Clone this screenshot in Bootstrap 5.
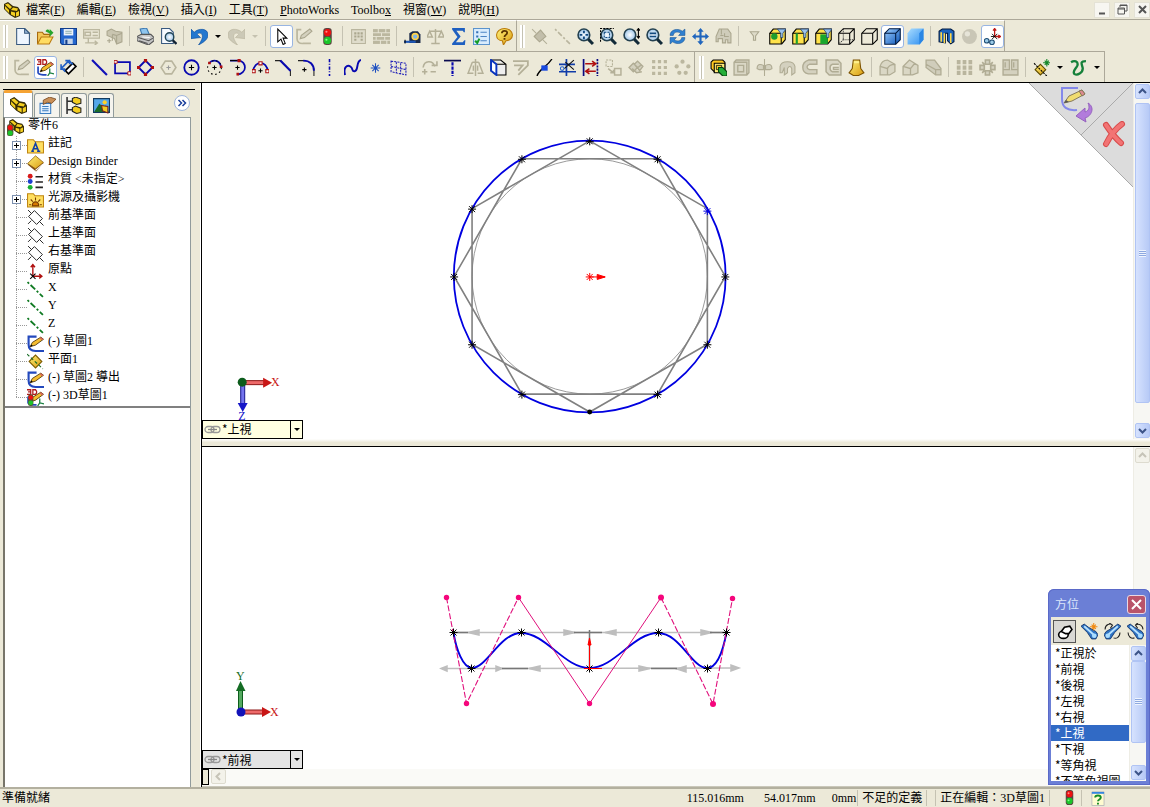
<!DOCTYPE html>
<html lang="zh-Hant">
<head>
<meta charset="utf-8">
<meta name="viewport" content="width=device-width, initial-scale=1">
<title>零件6 - 3D草圖1</title>
<link href="https://cdn.jsdelivr.net/npm/bootstrap@5.3.0/dist/css/bootstrap.min.css" rel="stylesheet">
<style>
:root{--face:#ece9d8;--shade:#aca899;--ui:"Liberation Serif","Noto Sans CJK TC",serif}
html,body{height:100%}
body{font:12px/16px var(--ui);background:var(--face);color:#000;overflow:hidden}
button{font:inherit;color:inherit;background:none;border:0;padding:0}
svg{display:block;flex:none}
.menu-row{height:20px;border-bottom:1px solid var(--shade)}
.menu-row a{color:#000;padding:2px 6px;text-decoration:none}
.win-btn{width:16px;height:16px;background:#f7f6f1;border:1px solid #e4e2d6;color:#555}
.tool-row{height:31px}
.tool-group{border-right:1px solid var(--shade);border-top:1px solid #fff;padding-left:3px}
.tool-row+.tool-row .tool-group{border-top:1px solid var(--shade)}
.grip{width:5px;height:23px;border-left:2px solid #fff;border-right:2px solid #fff;background:#c5c2b2;margin-right:3px}
.tool{width:23px;height:23px;display:flex;align-items:center;justify-content:center;flex:none}
.tool svg{width:17px;height:17px}
.tool.on{background:#fff;border:1px solid #98b5e2;border-radius:3px}
.drop{width:14px;height:23px;flex:none;display:flex;align-items:center;justify-content:center}
.drop::before{content:"";border:3px solid transparent;border-top-color:#000;border-bottom:0}
.drop.off::before{border-top-color:#c5c2b0}
.bar-sep{width:1px;height:20px;margin:0 4px 0 3px;background:#c5c2b2;flex:none}
.workspace{min-height:0;border-top:1px solid #000}
.side{width:201px;padding:6px 9px 0 3px;border-right:1px solid #fff;flex:none}
.side-tabs{height:28px;border-top:1px solid #000;margin-right:-4px}
.side-tab{width:26px;height:24px;margin-top:3px;border:1px solid #919b9c;border-bottom:0;border-radius:3px 3px 0 0;background:#f5f4ee;display:flex;align-items:center;justify-content:center;margin-right:1px}
.side-tab.active{width:30px;height:27px;margin-top:0;background:#fff;border-top:3px solid #f5a334}
.side-tab svg{width:17px;height:17px}
.more{width:16px;height:16px;border:1px solid #9db4dc;border-radius:50%;background:#fff;color:#1a3f9c;display:flex;align-items:center;justify-content:center;margin:5px 5px 0 auto}
.tree-box{background:#fff;border:1px solid #919b9c;border-left:2px solid #77756a;border-bottom:0;min-height:0;overflow:hidden}
.tree{padding:0 0 0 2px;border-bottom:2px solid #808080;white-space:nowrap}
.tree li{height:18px;display:flex;align-items:center}
.tree svg{width:17px;height:17px}
.tree-text{padding:0 0 4px 4px}
.twig{width:20px;height:18px;flex:none;display:flex;align-items:center;padding-left:5px;
 background:repeating-linear-gradient(90deg,#999 0 1px,transparent 1px 2px) 9px 9px/11px 1px no-repeat,repeating-linear-gradient(#999 0 1px,transparent 1px 2px) 9px 0/1px 18px no-repeat}
.tree li:last-child .twig{background-size:11px 1px,1px 10px}
.plus{width:9px;height:9px;border:1px solid #7b8fae;background:linear-gradient(#000,#000) 1px 3px/5px 1px no-repeat,linear-gradient(#000,#000) 3px 1px/1px 5px no-repeat,#fff}
.views{border-left:1px solid #000;min-width:0}
.pane{min-height:0;background:#fff}
.pane-top{flex:357 1 0}
.pane-bottom{flex:341 1 0}
.splitter{height:8px;border-bottom:1px solid #000;background:linear-gradient(#fff,var(--face) 50%)}
.canvas{min-width:0;min-height:0;overflow:hidden}
.canvas>svg{width:100%;height:100%}
.scroll-v{width:17px;background:#f7f7f3;padding:1px;flex:none;border-left:1px solid #eeede5}
.sb-btn,.sb-thumb{background:linear-gradient(90deg,#d6e2fe,#b7caf6);border:1px solid #b0c4f4;border-radius:2px;color:#3c5488;display:flex;align-items:center;justify-content:center}
.sb-btn{width:15px;height:15px;flex:none}
.sb-btn svg{width:9px;height:9px}
.sb-btn.off{background:#f3f2ea;border-color:#dddbcf;color:#c6c4b8}
.sb-thumb{width:15px}
.sb-lines{width:7px;height:7px;background:repeating-linear-gradient(#eef4fe 0 1px,#8ea9e0 1px 2px)}
.view-name{left:0;bottom:0;width:101px;height:19px;border:1px solid #000;background:#ffffe1;font-family:"Noto Sans CJK TC",sans-serif}
.view-name.idle{background:#e4e4e4}
.view-name select{appearance:none;border:0;background:none;padding:0;font:12px/16px "Noto Sans CJK TC",sans-serif;color:#000;width:70px;height:17px}
.view-name .drop{width:12px;height:17px;border-left:1px solid #000}
.view-name svg{width:17px;height:9px;margin:0 1px}
.corner{right:0;top:0;width:104px;height:104px}
.corner-ok{left:31px;top:2px}
.corner-no{left:72px;top:38px}
.scroll-h{height:18px;background:#fafaf7;border-bottom:1px solid #c9c7ba}
.split-box{width:7px;height:16px;border:1px solid #000;background:var(--face);margin-right:2px}
.palette{right:0;bottom:2px;width:102px;height:196px;background:#6b7fd6;border-radius:6px 6px 0 0;padding:0 4px 4px 3px;box-shadow:inset 0 0 0 1px #5a69c8}
.palette-head{height:28px;padding:2px 0 0 4px;color:#dce6fa}
.palette-head h2{font:12px/16px "Noto Sans CJK TC",sans-serif;margin:0}
.shut{width:19px;height:19px;border:1px solid #e8d8e4;border-radius:3px;background:#b9546a;color:#fff;display:flex;align-items:center;justify-content:center}
.palette-tools{height:28px;background:var(--face);padding:1px 2px}
.palette-tools .tool.push{border:1px solid #555;background:#d9d8d4;margin-right:2px}
.palette-list{background:#fff;min-height:0}
.view-list{font:12px/16px "Noto Sans CJK TC",sans-serif;overflow:hidden}
.view-list button{display:block;width:100%;height:16px;text-align:left;padding-left:4px;white-space:nowrap}
.view-list .sel{background:#316ac5;color:#fff}
.status{height:20px;border-top:2px solid #b3b09f;padding-left:2px;white-space:nowrap}
.status .cell{border-right:1px solid #c5c2b2;padding-right:4px;margin-right:4px;min-height:16px}
.status .cell-z{padding-right:1px}
.status-end{padding:0 45px 0 4px}
.status svg{width:15px;height:15px}
</style>
</head>
<body class="d-flex flex-column">

<svg width="0" height="0" class="position-absolute" aria-hidden="true">
<defs>
<linearGradient id="gold" x1="0" y1="0" x2="1" y2="1"><stop offset="0" stop-color="#fff27a"/><stop offset="1" stop-color="#d99a10"/></linearGradient>
<linearGradient id="azure" x1="0" y1="0" x2="1" y2="1"><stop offset="0" stop-color="#9fd0ff"/><stop offset="1" stop-color="#0c55b8"/></linearGradient>
<linearGradient id="sky" x1="0" y1="0" x2="1" y2="1"><stop offset="0" stop-color="#a8dcff"/><stop offset="1" stop-color="#2f8ff0"/></linearGradient>
<radialGradient id="lens"><stop offset="0" stop-color="#fff"/><stop offset="1" stop-color="#9cc4e8"/></radialGradient>
</defs>
<g id="star-mark" stroke="currentColor" fill="none"><path d="M-4 0H4M0-4V4M-3-3L3 3M-3 3L3-3"/></g>
<symbol id="part" viewBox="0 0 16 16"><path d="M0 2L4 0 9 4 14 5 16 8V14L11 16 6 13 0 7z" fill="#352b05"/><path d="M1 2.500L4 1.500 8 5 6 7zM7 8L9 5.500 14 6.500 13 9zM7 9.500L11 10.500V14.500L7 12.500zM12 10.500L15 9V13.500L12 14.500zM1 4L5 8V11L1 7z" fill="#f4cf20"/></symbol>
<symbol id="new" viewBox="0 0 16 16"><path d="M2.500.5H10L14.500 5V15.500H2.500z" fill="#eef6ff" stroke="#38597f"/><path d="M10 .5V5H14.500z" fill="#9fbfe0" stroke="#38597f"/></symbol>
<symbol id="open" viewBox="0 0 16 16"><path d="M.5 15V4H5L6.500 6H12V9" fill="#f4c95a" stroke="#a8690c"/><path d="M.5 15L4 8.500H15L11.500 15z" fill="#ffdc62" stroke="#b87a12"/><path d="M8 3C9 1 11 1 12 3V1L15.500 4.500 12 8V5.500C11 4 9.500 4 8 3z" fill="#27a52c"/></symbol>
<symbol id="save" viewBox="0 0 16 16"><path d="M.5 .5H15.500V15.500H2L.5 14z" fill="#2467cf" stroke="#123e8c"/><path d="M3.500 1H12.500V7H3.500z" fill="#eef3fb"/><path d="M4 10H12V15H4z" fill="#c5d4ea"/><path d="M5 11H7V15H5z" fill="#123e8c"/><path d="M5 3H11M5 5H11" stroke="#8aa"/></symbol>
<symbol id="g-draw" viewBox="0 0 16 16"><path d="M.5 1.500H15.500V9.500H.5zM2 4H7V7H2zM9 4H14M9 7H14M5 10V14M2 14H13M11 12L13.500 14 11 16" fill="none" stroke="#bbb79f" stroke-width="1.300"/></symbol>
<symbol id="g-asm" viewBox="0 0 16 16"><path d="M1 3L5 1 9 3 15 4V13L10 15 8 10 1 7z" fill="#c9c5b0" stroke="#aaa68e"/><path d="M6 6V12M10 7V14M6 6L10 7 15 5M1 12H5M3 10V14" stroke="#aaa68e" fill="none"/></symbol>
<symbol id="print" viewBox="0 0 16 16"><path d="M3 1L9 0 12 7H5z" fill="#8ec5ef" stroke="#3b78b0"/><path d="M0 8L4 6H13L16 9V12L11 16 0 12z" fill="#c4c4c4" stroke="#555"/><path d="M1 9L11 12 15 9.500M2 12L10 14.500" fill="none" stroke="#555"/><path d="M5 8.500L12 9" stroke="#fff"/></symbol>
<symbol id="preview" viewBox="0 0 16 16"><path d="M1.500.5H9L12.500 4V14.500H1.500z" fill="#f6faff" stroke="#38597f"/><circle cx="9" cy="8.500" r="4" fill="url(#lens)" stroke="#245" stroke-width="1.300"/><path d="M12 11.500L15.500 15" stroke="#123" stroke-width="2.200"/></symbol>
<symbol id="undo" viewBox="0 0 16 16"><path d="M0 1L3 4C7 0 16 0 16 6.500 16 11 11 14 7 16 11 11 12 6 9 5 7.500 4.500 6.500 5 6 6L9 9 0 10z" fill="#2277cf" stroke="#0f4f9c" stroke-width=".6"/></symbol>
<symbol id="redo" viewBox="0 0 16 16"><path d="M16 1L13 4C9 0 0 0 0 6.500 0 11 5 14 9 16 5 11 4 6 7 5 8.500 4.500 9.500 5 10 6L7 9 16 10z" fill="#ccc9b7" stroke="#b9b59e" stroke-width=".6"/></symbol>
<symbol id="arrow" viewBox="0 0 16 16"><path d="M4.500 1V13L7.500 10.500 9.500 15.500 11.500 14.500 9.500 9.500H13z" fill="#fff" stroke="#000"/></symbol>
<symbol id="g-sketch" viewBox="0 0 16 16"><path d="M5 1.500H1V10C1 13 3 15 7 14.500H14" fill="none" stroke="#bbb79f" stroke-width="1.600"/><path d="M4 10L5 7 13 1 15 3 8 9z" fill="#d4d1bf" stroke="#aaa68e"/></symbol>
<symbol id="light" viewBox="0 0 16 16"><rect x="4" y="0" width="8" height="16" rx="3" fill="#5c4440"/><circle cx="8" cy="4.300" r="3.400" fill="#e11"/><circle cx="8" cy="11.700" r="3.400" fill="#1bc62b"/><circle cx="7" cy="3.500" r="1" fill="#f88"/><circle cx="7" cy="11" r="1" fill="#8f8"/></symbol>
<symbol id="g-grid" viewBox="0 0 16 16"><path d="M1.500 1.500H14.500V14.500H1.500z" fill="#dfdccb" stroke="#b9b59e"/><path d="M4 4H6V6H4zM7 4H9V6H7zM10 4H12V6H10zM4 7H6V9H4zM7 7H9V9H7zM10 7H12V9H10zM4 10H6V12H4zM10 10H12V12H10z" fill="#aaa68e"/></symbol>
<symbol id="g-brick" viewBox="0 0 16 16"><path d="M0 1H16V15H0z" fill="#bbb79f"/><path d="M0 4.500H16M0 8H16M0 11.500H16M5 1V4.500M12 1V4.500M8 4.500V8M3 8V11.500M11 8V11.500M7 11.500V15M13 11.500V15" stroke="#e6e3d3"/></symbol>
<symbol id="tape" viewBox="0 0 16 16"><path d="M5 14V5L8 3H13L15.500 6V14z" fill="#1b2a48"/><circle cx="10.500" cy="8" r="3.500" fill="#ffd24a"/><circle cx="10.500" cy="8" r="2" fill="#7fb6ea"/><path d="M0 13H11" stroke="#1e56b5" stroke-width="2"/><path d="M1 14.500V11" stroke="#000"/></symbol>
<symbol id="g-scale" viewBox="0 0 16 16"><path d="M8 1V14M4 14.500H12M2 3H14M0 8.500H5L2.500 3zM11 8.500H16L13.500 3z" fill="none" stroke="#b4b098" stroke-width="1.400"/></symbol>
<symbol id="sigma" viewBox="0 0 16 16"><path d="M2 0H14V4H13L12 2.500H6L10 8 5.500 13.500H12L13.500 11.500H14.500L14 16H2V14.500L7 8.500 2 1.500z" fill="#1e5fc0"/></symbol>
<symbol id="checks" viewBox="0 0 16 16"><path d="M.5.5H15.500V15.500H.5z" fill="#d9ecfd" stroke="#5b93cc"/><path d="M3 3H5V5H3zM3 7H5V9H3z" fill="#3570b5"/><path d="M7 4H13M7 8H13M7 12H13" stroke="#4c84c3"/><path d="M2 12L4 14 6 10" fill="none" stroke="#159c28" stroke-width="2"/></symbol>
<symbol id="help" viewBox="0 0 16 16"><path d="M8 .5C12 .5 15.500 3 15.500 6.500 15.500 10 12 12 9.500 12L7 16 6 12C3 12 .5 10 .5 6.500.5 3 4 .5 8 .5z" fill="url(#gold)" stroke="#b97a0a"/><path d="M5.500 5C5.500 2 10.500 2 10.500 4.500 10.500 6.500 8 6.500 8 8.500M8 9.500V11" fill="none" stroke="#5c3500" stroke-width="1.700"/></symbol>
<symbol id="g-plane" viewBox="0 0 16 16"><path d="M1 1L5 5M11 11L15 15" stroke="#b4b098"/><path d="M3 8L9 2 14 8 8 13z" fill="#c2beaa" stroke="#aaa68e"/></symbol>
<symbol id="g-axis" viewBox="0 0 16 16"><path d="M1 1L15 15" stroke="#b9b59e" stroke-width="1.500" stroke-dasharray="2 2 5 2"/></symbol>
<symbol id="mag" viewBox="0 0 16 16"><circle cx="6.500" cy="6.500" r="5.500" fill="url(#lens)" stroke="#23404f" stroke-width="1.500"/><path d="M10.500 10.500L15 15" stroke="#122a38" stroke-width="2.800"/></symbol>
<symbol id="zfit" viewBox="0 0 16 16"><use href="#mag"/><path d="M6.500 2.500V5M6.500 8V10.500M2.500 6.500H5M8 6.500H10.500" fill="none" stroke="#124a80" stroke-width="1.800"/></symbol>
<symbol id="zarea" viewBox="0 0 16 16"><use href="#mag"/><path d="M.5 13V.5H13" fill="none" stroke="#000" stroke-dasharray="2 1"/><path d="M4 4H9V9H4z" fill="none" stroke="#124a80" stroke-dasharray="2 1"/></symbol>
<symbol id="zinout" viewBox="0 0 16 16"><use href="#mag"/><path d="M14.500 1V9M13 2.500L14.500.5 16 2.500M13 7.500L14.500 9.500 16 7.500" fill="none" stroke="#000"/></symbol>
<symbol id="zsel" viewBox="0 0 16 16"><use href="#mag"/><path d="M3.500 5H9.500M3.500 8H9.500" stroke="#124a80" stroke-width="1.600"/></symbol>
<symbol id="rotate" viewBox="0 0 16 16"><path d="M1 7C1 1 9 0 12.500 3L15 1V7H9L11 5C8 3 4.500 3.500 4 7zM15 9C15 15 7 16 3.500 13L1 15V9H7L5 11C8 13 11.500 12.500 12 9z" fill="#2f80d0" stroke="#14508f" stroke-width=".5"/></symbol>
<symbol id="pan" viewBox="0 0 16 16"><path d="M8 0L11 3.500H9V7H12.500V5L16 8 12.500 11V9H9V12.500H11L8 16 5 12.500H7V9H3.500V11L0 8 3.500 5V7H7V3.500H5z" fill="#1f65bd"/></symbol>
<symbol id="g-car" viewBox="0 0 16 16"><path d="M1 8L4 1H12L15 5V14H12V11H10V14H7V10H3V13H1z" fill="#cfccba" stroke="#aaa68e"/><path d="M5 7H8M9 5V8H13M6 1V6" stroke="#aaa68e" fill="none"/></symbol>
<symbol id="g-filter" viewBox="0 0 16 16"><path d="M4 3.500H12L9 7.500V11.500H7V7.500z" fill="#dedbc9" stroke="#aaa68e"/></symbol>
<symbol id="cube-y" viewBox="0 0 16 16"><path d="M.7 5L4 1H15.300V11L12 15H.7z" fill="#ffe24a" stroke="#000"/><path d="M.7 5H11.500V15M11.500 5L15.300 1" fill="none" stroke="#000"/></symbol>
<symbol id="fv" viewBox="0 0 16 16"><use href="#cube-y"/><circle cx="5" cy="8" r="3" fill="#1c9e2e"/><path d="M8 1H16L13 5V9H11V5z" fill="#9dc4ec" stroke="#1d3f72" stroke-width=".7"/></symbol>
<symbol id="fe" viewBox="0 0 16 16"><use href="#cube-y"/><path d="M4.500 5V15" stroke="#1c9e2e" stroke-width="2"/><path d="M8 1H16L13 5V9H11V5z" fill="#9dc4ec" stroke="#1d3f72" stroke-width=".7"/></symbol>
<symbol id="ff" viewBox="0 0 16 16"><use href="#cube-y"/><path d="M5 6H12V15H5z" fill="#18a62d"/><path d="M8 1H16L13 5V9H11V5z" fill="#9dc4ec" stroke="#1d3f72" stroke-width=".7"/></symbol>
<symbol id="wire" viewBox="0 0 16 16"><path d="M.7 5L5 .7H15.300V11L11 15.300H.7zM.7 5H11V15.300M11 5L15.300.7" fill="none" stroke="#000"/><path d="M5 1V11H15M5 11L1 15" fill="none" stroke="#333" stroke-dasharray="1 1"/></symbol>
<symbol id="hidden" viewBox="0 0 16 16"><path d="M.7 5L5 .7H15.300V11L11 15.300H.7zM.7 5H11V15.300M11 5L15.300.7" fill="none" stroke="#000"/></symbol>
<symbol id="shaded" viewBox="0 0 16 16"><path d="M.7 5L5 .7H15.300V11L11 15.300H.7z" fill="url(#azure)" stroke="#001a40"/><path d="M.7 5H11V15.300M11 5L15.300.7" fill="none" stroke="#001a40"/></symbol>
<symbol id="shade2" viewBox="0 0 16 16"><path d="M.5 5L4 .5H15.500V11L12 15.500H.5z" fill="url(#sky)"/><path d="M11.500 5L15.500.5V11L11.500 15.500z" fill="#2a86e4"/></symbol>
<symbol id="section" viewBox="0 0 16 16"><path d="M1 3L4 1H12L15 3V13L12 15 9 12V5H7V14L1 13z" fill="#1b62bb" stroke="#001a40"/><path d="M3 4V13M6 5V14M12 5V14" stroke="#ffd84a" stroke-width="1.500"/></symbol>
<symbol id="g-ball" viewBox="0 0 16 16"><circle cx="8" cy="8" r="7" fill="#c9c6b6"/><circle cx="6" cy="5.500" r="2.500" fill="#e6e4d8"/></symbol>
<symbol id="glasses" viewBox="0 0 16 16"><circle cx="2.500" cy="12" r="2.200" fill="#9ccbe8" stroke="#1a4a72"/><circle cx="7.500" cy="13.500" r="2.200" fill="#9ccbe8" stroke="#1a4a72"/><path d="M10 1V8H15M8.500 2.500L10 .5 11.500 2.500M13.500 6.500L15.500 8 13.500 9.500" fill="none" stroke="#c01818" stroke-width="1.200"/><path d="M7.500 5.500L12.500 10.500M7.500 10.500L12.500 5.500M6.500 8H10" stroke="#000" stroke-width=".8"/></symbol>

<symbol id="pencil" viewBox="0 0 16 16"><path d="M3 11L5 7 13 2 15.500 4 8 9.500z" fill="#f5bd30" stroke="#4c3000" stroke-width=".8"/><path d="M13 2L15.500 4 14 5 12 3z" fill="#d5645a"/><path d="M3 11L4 9 5.500 10z" fill="#000"/></symbol>
<symbol id="sketch" viewBox="0 0 16 16"><path d="M9 1.500H1.500V9C1.500 13 4 15 8 15H16" fill="none" stroke="#2349bd" stroke-width="2"/><use href="#pencil"/></symbol>
<symbol id="sketch3d" viewBox="0 0 16 16"><path d="M0 .7H3.500V5H0M1 2.800H3.500M5.500.7H8L9 2V4L8 5H5.500z" fill="none" stroke="#b01c1c" stroke-width="1.200"/><path d="M1 7V13C2 15 5 15 9 15" fill="none" stroke="#2349bd" stroke-width="1.600"/><use href="#pencil" y="1"/><path d="M12 9V13L16 14M12 13L10 16" fill="none" stroke="#188040" stroke-width="1.200"/></symbol>
<symbol id="dim" viewBox="0 0 16 16"><path d="M5 11L12 4 15 7 8 14z" fill="#fff" stroke="#000" stroke-width="1.500"/><path d="M1 9L8 2M1 5V9.500H5M5 1.500H9V5M1 8L5 12M8 1L12 5" fill="none" stroke="#225fc4" stroke-width="1.500"/></symbol>
<symbol id="line" viewBox="0 0 16 16"><path d="M1 1L15 15" stroke="#1010b8" stroke-width="2"/></symbol>
<symbol id="rect" viewBox="0 0 16 16"><path d="M1 3H15V13.500H1z" fill="none" stroke="#0808b0" stroke-width="1.600"/><path d="M0 1.500H3V4H0zM13 12H16V15H13z" fill="#fff" stroke="#b01010" stroke-width=".9"/></symbol>
<symbol id="diam" viewBox="0 0 16 16"><path d="M8 1.500L14.500 8 8 14.500 1.500 8z" fill="none" stroke="#0808b0" stroke-width="1.800"/><path d="M6.500 0H9.500V3H6.500zM0 6.500H3V9.500H0zM13 6.500H16V9.500H13zM6.500 13H9.500V16H6.500z" fill="#b01010"/></symbol>
<symbol id="g-hex" viewBox="0 0 16 16"><path d="M5 2H11L15 8 11 14H5L1 8z" fill="none" stroke="#b9b59e" stroke-width="1.500"/><path d="M8 6V10M6 8H10" stroke="#999"/></symbol>
<symbol id="circ" viewBox="0 0 16 16"><circle cx="8" cy="8" r="6.800" fill="none" stroke="#0808b0" stroke-width="1.700"/><path d="M8 5.500V10.500M5.500 8H10.500" stroke="#000"/></symbol>
<symbol id="arc1" viewBox="0 0 16 16"><path d="M3 4C6 0 13 1 14 7" fill="none" stroke="#0808b0" stroke-width="1.600"/><circle cx="8" cy="8" r="6.500" fill="none" stroke="#000" stroke-dasharray="1.500 2.500"/><path d="M8 6V10M6 8H10" stroke="#000"/><path d="M2 2.500H4.500V5H2zM13 6H15.500V8.500H13z" fill="#b01010"/></symbol>
<symbol id="arc2" viewBox="0 0 16 16"><path d="M1 1.500H9C13 1.500 15 5 15 8S12 14.500 8 14.500" fill="none" stroke="#0808b0" stroke-width="1.600"/><path d="M1 1.500H8" stroke="#000"/><path d="M8 6V10M6 8H10" stroke="#000"/><path d="M8 0H11V3H8zM7 13H9.500V15.500H7z" fill="#b01010"/></symbol>
<symbol id="arc3" viewBox="0 0 16 16"><path d="M1 12C2 1 14 1 15 12" fill="none" stroke="#0808b0" stroke-width="1.600"/><path d="M6.500 2.500H9.500V5.500H6.500zM0 10H3V13H0zM13 10H16V13H13z" fill="#fff" stroke="#b01010"/><path d="M8 9V13M6 11H10" stroke="#000"/></symbol>
<symbol id="chamf" viewBox="0 0 16 16"><path d="M0 1.500H5L14.500 11V16" fill="none" stroke="#222"/><path d="M5 1.500L14.500 11" stroke="#0808b0" stroke-width="2"/></symbol>
<symbol id="fillet" viewBox="0 0 16 16"><path d="M0 1.500H6M15 9V16" stroke="#222"/><path d="M5 1.500C11 1.500 15 5 15 11" fill="none" stroke="#0808b0" stroke-width="1.800"/><path d="M6 8V12M4 10H8" stroke="#000"/></symbol>
<symbol id="cline" viewBox="0 0 16 16"><path d="M8 0V16" stroke="#0808b0" stroke-width="1.500" stroke-dasharray="3 1.500 1 1.500"/></symbol>
<symbol id="spline" viewBox="0 0 16 16"><path d="M1 15C-1 8 3 5 6 7 9 9 7 12 10 11.500 14 11 11 2 16 1" fill="none" stroke="#0808b0" stroke-width="1.800"/></symbol>
<symbol id="pt" viewBox="0 0 16 16"><path d="M8 4V13M3.500 8.500H12.500M5 5.500L11 11.500M11 5.500L5 11.500" stroke="#1d4fc0"/></symbol>
<symbol id="skplane" viewBox="0 0 16 16"><path d="M1 2L15 4V15L1 12zM1 7L15 10M6 3V13M10 4V14" fill="none" stroke="#2222b8" stroke-dasharray="2 1"/></symbol>
<symbol id="g-redo2" viewBox="0 0 16 16"><path d="M2 8C3 1 11 1 13 7M10 6H15V2" fill="none" stroke="#b4b098" stroke-width="1.500"/><path d="M1 12H6M3.500 9.500V14.500M9 12H14" stroke="#b4b098" stroke-width="1.500"/></symbol>
<symbol id="tee" viewBox="0 0 16 16"><path d="M0 1.500H16" stroke="#0a0a50" stroke-width="1.600"/><path d="M8 3V16" stroke="#0808b0" stroke-width="2" stroke-dasharray="3 1"/></symbol>
<symbol id="g-mirror" viewBox="0 0 16 16"><path d="M8 0V16M5 3L1 13.500H6M11 3L15 13.500H10M6 6V11M10 6V11M5 3H11" fill="none" stroke="#b4b098" stroke-width="1.400"/></symbol>
<symbol id="convert" viewBox="0 0 16 16"><path d="M1 1H10L15 5V15H6L1 11zM1 1L6 5H15M6 5V15" fill="#eee" stroke="#000"/><path d="M1 1V11L6 15V5z" fill="#fff" stroke="#0a35c0" stroke-width="1.800"/></symbol>
<symbol id="g-offset" viewBox="0 0 16 16"><path d="M0 2H14V6L5 15M1 6H9L5 11" fill="none" stroke="#b4b098" stroke-width="1.700"/></symbol>
<symbol id="snap" viewBox="0 0 16 16"><path d="M1 16C3 9 10 8 15 0" fill="none" stroke="#000" stroke-width="1.300"/><path d="M5 6H11V11H5z" fill="#194ae0"/></symbol>
<symbol id="trim" viewBox="0 0 16 16"><path d="M0 5H15M0 12H16M7 0V16" stroke="#113ca8" stroke-width="1.600"/><path d="M5 9L14 1M6 3L14 10" stroke="#111"/><circle cx="3" cy="9" r="1.700" fill="none" stroke="#2563d0"/></symbol>
<symbol id="extend" viewBox="0 0 16 16"><path d="M1.500 0V16" stroke="#0a0a80" stroke-width="1.600"/><path d="M14.500 0V16" stroke="#0a0a80" stroke-dasharray="2 1" stroke-width="1.600"/><path d="M3 4.500H12M9.500 2L13 4.500 9.500 7M13 11.500H4M7 9L3.500 11.500 7 14" fill="none" stroke="#b01010" stroke-width="1.500"/></symbol>
<symbol id="g-move" viewBox="0 0 16 16"><path d="M1 1H7V7H1z" fill="none" stroke="#b4b098" stroke-dasharray="2 1"/><path d="M9 9H15V15H9zM3 9L8 13M5 13H8V10" fill="none" stroke="#b4b098" stroke-width="1.400"/></symbol>
<symbol id="g-rot" viewBox="0 0 16 16"><path d="M1 8L5 4 9 8 5 12zM6 5L9 2 14 7 11 11zM8 9L12 6M4 9L8 13 13 12" fill="#d4d1bf" stroke="#b0ac94" stroke-width="1.300"/></symbol>
<symbol id="g-lin" viewBox="0 0 16 16"><path d="M1 1H4V4H1zM6.500 1H9.500V4H6.500zM12 1H15V4H12zM1 6.500H4V9.500H1zM6.500 6.500H9.500V9.500H6.500zM12 6.500H15V9.500H12zM1 12H4V15H1zM6.500 12H9.500V15H6.500zM12 12H15V15H12z" fill="#bbb79f"/></symbol>
<symbol id="g-cir" viewBox="0 0 16 16"><g fill="#bbb79f"><circle cx="8" cy="2.500" r="2"/><circle cx="2.500" cy="7" r="2"/><circle cx="13.500" cy="7" r="2"/><circle cx="5" cy="13" r="2"/><circle cx="11" cy="13" r="2"/></g></symbol>
<symbol id="extrude" viewBox="0 0 16 16"><path d="M1 3L3 1H12L14 3V12H4L1 9z" fill="#ffc820" stroke="#000"/><path d="M4 4H14V13H4z" fill="#ffec78" stroke="#000"/><path d="M6 6H11V10H6z" fill="#f5c830" stroke="#000" stroke-width=".7"/><path d="M8 8H12L16 12V16H12L8 12z" fill="#25ad38" stroke="#04400c"/></symbol>
<symbol id="g-cut" viewBox="0 0 16 16"><path d="M1 3L3 1H15V13L13 15H1zM1 3H13V15M4.500 6H10V12H4.500z" fill="#dad7c5" stroke="#b0ac94" stroke-width="1.300"/></symbol>
<symbol id="g-rev" viewBox="0 0 16 16"><path d="M8 0V16M1 9C1 4 5 5 7 6V10H3zM15 9C15 4 11 5 9 6V10H13z" fill="#d4d1bf" stroke="#b0ac94"/></symbol>
<symbol id="g-arch" viewBox="0 0 16 16"><path d="M1 13V7C2 1 14 1 15 7V13L12 15V9C11 6 9 7 8 9V13L5 15V8L3 13z" fill="#d4d1bf" stroke="#b0ac94"/></symbol>
<symbol id="g-sweep" viewBox="0 0 16 16"><path d="M14 1H6C-1 3-1 13 6 14H14V10H7C4 9 4 6 7 5H14z" fill="#d4d1bf" stroke="#b0ac94" stroke-width="1.300"/></symbol>
<symbol id="g-swcut" viewBox="0 0 16 16"><path d="M1 1H12L15 4V15H4L1 12zM13 5H7C4 6 4 11 7 12H13M13 8H8V10H13" fill="#d9d6c5" stroke="#b0ac94" stroke-width="1.400"/></symbol>
<symbol id="loft" viewBox="0 0 16 16"><path d="M5 1H11L12 9 15 13 10 15.500H5L1 13 4 9z" fill="url(#gold)" stroke="#7c5200"/><path d="M5.500 2H10.500V4H5.500z" fill="#ffef8a"/></symbol>
<symbol id="g-fil" viewBox="0 0 16 16"><path d="M1 7C2 3 5 1 8 1L15 5V12L10 15H1zM1 7L8 9V15M8 9C9 6 12 5 15 5" fill="#dad7c5" stroke="#b0ac94" stroke-width="1.200"/></symbol>
<symbol id="g-cha" viewBox="0 0 16 16"><path d="M1 7L7 1 15 6V13L10 15H1zM1 7L8 9V15M8 9L12 4" fill="#dad7c5" stroke="#b0ac94" stroke-width="1.200"/></symbol>
<symbol id="g-rib" viewBox="0 0 16 16"><path d="M1 1H9L15 9V15H10L1 8zM1 5L10 10V15M10 10H15" fill="#d0cdbb" stroke="#b0ac94" stroke-width="1.200"/></symbol>
<symbol id="g-pat" viewBox="0 0 16 16"><path d="M2.500 1V15M8 1V15M13.500 1V15" stroke="#b9b59e" stroke-width="3.500" stroke-dasharray="4 1"/></symbol>
<symbol id="g-cpat" viewBox="0 0 16 16"><path d="M6 1H10V5H6zM6 11H10V15H6zM1 6H5V10H1zM11 6H15V10H11zM3 3L5 5M13 3L11 5M3 13L5 11M13 13L11 11" fill="#d4d1bf" stroke="#b0ac94" stroke-width="1.500"/></symbol>
<symbol id="g-mir" viewBox="0 0 16 16"><path d="M1 1H7V10H1zM9 1H15V10H9zM1 10V15H15V10M3 3V8M11 3V8" fill="#d4d1bf" stroke="#b0ac94" stroke-width="1.300"/></symbol>
<symbol id="refgeo" viewBox="0 0 16 16"><path d="M2 10L7 5 12 10 7 15z" fill="url(#gold)" stroke="#5c4a00"/><path d="M1 4L13 16" stroke="#000" stroke-dasharray="2 1"/><path d="M13 0V7M9.500 3.500H16.500M11 1.500L15 5.500M15 1.500L11 5.500" stroke="#15872a"/></symbol>
<symbol id="curve" viewBox="0 0 16 16"><path d="M1 3C4 1 8 2 7 6 6 9 2 11 4 14 7 16 12 13 12 9 12 6 8 2 15 2" fill="none" stroke="#15803a" stroke-width="2.200"/></symbol>

<symbol id="hand" viewBox="0 0 16 16"><path d="M1 6H11V15.500H1z" fill="#e6f2ff" stroke="#3a7cc0"/><path d="M3 9H9M3 11H9M3 13H9" stroke="#3a7cc0"/><path d="M4 3L10 0 16 2 12 6 8 5 4 7z" fill="#c99058" stroke="#6b3c14" stroke-width=".7"/></symbol>
<symbol id="config" viewBox="0 0 16 16"><path d="M1 0V16M1 4H7M1 12H7" stroke="#333" stroke-width="1.500"/><path d="M6 1.500L9 0 14 2V6L10 7 6 5zM6 10L9 8.500 14 10.500V14.500L10 15.500 6 13.500z" fill="#f2cc20" stroke="#222"/></symbol>
<symbol id="photo" viewBox="0 0 16 16"><path d="M.5 1.500H15.500V14.500H.5z" fill="#56a8ea" stroke="#123a60"/><path d="M1 14L6 6 10 10 12 8 15 14z" fill="#1b6c2a"/><circle cx="11" cy="5" r="2" fill="#ffd22a"/><path d="M8 8L14 9V15L9 13z" fill="#f2cc20" stroke="#722"/></symbol>
<symbol id="partlight" viewBox="0 0 16 16"><use href="#part" x="2" width="14" height="14"/><rect x="0" y="5" width="6" height="11" rx="2" fill="#553"/><circle cx="3" cy="8" r="2.400" fill="#e11"/><circle cx="3" cy="13.200" r="2.400" fill="#1bc62b"/></symbol>
<symbol id="folder" viewBox="0 0 16 16"><path d="M.5 15V2.500H6L7.500 4.500H15.500V15z" fill="#ffdf60" stroke="#c08612"/></symbol>
<symbol id="notes" viewBox="0 0 16 16"><use href="#folder"/><path d="M4 13.500H6.500M9.500 13.500H12.500M5 13.500L8 6 11 13.500M6 11H10" fill="none" stroke="#123fa8" stroke-width="1.400"/></symbol>
<symbol id="binder" viewBox="0 0 16 16"><path d="M.5 9L8 1.500 15.500 8 8.500 15.500z" fill="#7d4a12"/><path d="M.5 8L8 .8 15.500 7 8 13z" fill="url(#gold)" stroke="#8a5a10" stroke-width=".7"/><path d="M8 14.500L15 8.500" stroke="#fff"/></symbol>
<symbol id="material" viewBox="0 0 16 16"><circle cx="3" cy="3" r="2.300" fill="#d81a1a"/><circle cx="3" cy="8" r="2.300" fill="#1c40d0"/><circle cx="3" cy="13.500" r="2.300" fill="#18b030"/><path d="M8 3.500H15M8 8.500H15M8 13.500H15" stroke="#222" stroke-width="1.500"/></symbol>
<symbol id="sun" viewBox="0 0 16 16"><use href="#folder"/><path d="M5 14C5 9 11 9 11 14zM8 6V9M3.500 8L5.500 10M12.500 8L10.500 10M2 13H4M12 13H14" fill="#d87a00" stroke="#7a3b00"/></symbol>
<symbol id="plane" viewBox="0 0 16 16"><path d="M1.500 7L7 1.500 14.500 9 9 14.500zM1 1L4 4M12 12L15.500 15.500M1 14L4 11" fill="none" stroke="#222" stroke-width=".9"/></symbol>
<symbol id="origin" viewBox="0 0 16 16"><path d="M5.500 1V12.500H14M3.500 4L5.500 1.500 7.500 4M11.500 10.500L14 12.500 11.500 14.500" fill="none" stroke="#b01010" stroke-width="1.300"/><path d="M3 10L8 15M8 10L3 15" stroke="#000"/></symbol>
<symbol id="axis" viewBox="0 0 16 16"><path d="M.5 1L15 15" stroke="#0f7a22" stroke-width="1.700" stroke-dasharray="2 2 6 2"/></symbol>
<symbol id="plane-y" viewBox="0 0 16 16"><path d="M2 8L8 2 14 8 8 14z" fill="url(#gold)" stroke="#7d5c00"/><path d="M0 1L15 15" stroke="#156b25" stroke-dasharray="3 2"/></symbol>
<symbol id="sk3dl" viewBox="0 0 16 16"><use href="#sketch3d"/><rect x="1" y="5" width="5" height="11" rx="2" fill="#553"/><circle cx="3.500" cy="8" r="2.200" fill="#e11"/><circle cx="3.500" cy="13" r="2.200" fill="#1bc62b"/></symbol>
<symbol id="up" viewBox="0 0 9 9"><path d="M1 6L4.500 2.500 8 6" fill="none" stroke="currentColor" stroke-width="2"/></symbol>
<symbol id="down" viewBox="0 0 9 9"><path d="M1 3L4.500 6.500 8 3" fill="none" stroke="currentColor" stroke-width="2"/></symbol>
<symbol id="left" viewBox="0 0 9 9"><path d="M6 1L2.500 4.500 6 8" fill="none" stroke="currentColor" stroke-width="2"/></symbol>
<symbol id="link" viewBox="0 0 17 9"><rect x="1" y="1.500" width="9" height="6" rx="3" fill="none" stroke="#999" stroke-width="1.300"/><rect x="7" y="1.500" width="9" height="6" rx="3" fill="none" stroke="#999" stroke-width="1.300"/><path d="M4 4.500H13" stroke="#888" stroke-width="1.300"/></symbol>
<symbol id="pin" viewBox="0 0 16 16"><ellipse cx="7" cy="11" rx="4.500" ry="3.500" fill="#fff" stroke="#000" stroke-width="1.500"/><path d="M5 8L8 4 13 3 15 6 12 10 9 10z" fill="#fff" stroke="#000" stroke-width="1.500"/></symbol>
<symbol id="scope" viewBox="0 0 16 16"><path d="M0 3L3 1 7 4 14 8 16 11 14 15 10 15 6 9z" fill="#2f74c4" stroke="#0f2f66" stroke-width=".8"/><path d="M3 3L12 11" stroke="#b8e2ff" stroke-width="1.800"/><circle cx="12.500" cy="12" r="2.200" fill="#a9dcff"/></symbol>
<symbol id="scope-new" viewBox="0 0 16 16"><use href="#scope"/><path d="M12 0V7M8.500 3.500H15.500M10 1.500L14 5.500M14 1.500L10 5.500" stroke="#f08a12"/></symbol>
<symbol id="scope-upd" viewBox="0 0 16 16"><path d="M16 3L13 1 9 4 2 8 0 11 2 15 6 15 10 9z" fill="#2f74c4" stroke="#0f2f66" stroke-width=".8"/><path d="M13 3L4 11" stroke="#b8e2ff" stroke-width="1.800"/><circle cx="3.500" cy="12" r="2.200" fill="#a9dcff"/><path d="M1 6C1 1 6 0 8 2M15 9C15 14 11 15 9 14M5 0L8 2 6 5" fill="none" stroke="#222"/></symbol>
<symbol id="scope-res" viewBox="0 0 16 16"><use href="#scope"/><path d="M8 2C11 0 15 2 15 6M1 9C1 13 4 15 7 14M10 0L8 2 10 5" fill="none" stroke="#222"/></symbol>
<symbol id="qhelp" viewBox="0 0 16 16"><path d="M2 1H15V15.500H2z" fill="#fffbd0" stroke="#bbb"/><path d="M2 1H15V3H2z" fill="#3585e0"/><path d="M5.500 7C5.500 4 11.500 4 11.500 7 11.500 9 8.500 9 8.500 11M8.500 12.500V14.500" fill="none" stroke="#138a24" stroke-width="2"/></symbol>
</svg>

<nav class="menu-row d-flex align-items-center flex-shrink-0" aria-label="功能表">
  <svg width="16" height="16" class="ms-1"><use href="#part"/></svg>
  <a href="#">檔案(<u>F</u>)</a><a href="#">編輯(<u>E</u>)</a><a href="#">檢視(<u>V</u>)</a><a href="#">插入(<u>I</u>)</a><a href="#">工具(<u>T</u>)</a><a href="#"><u>P</u>hotoWorks</a><a href="#">Toolbo<u>x</u></a><a href="#">視窗(<u>W</u>)</a><a href="#">說明(<u>H</u>)</a>
  <div class="d-flex ms-auto gap-1">
    <button class="win-btn" aria-label="最小化"><svg width="14" height="14"><path d="M4 10.500H10" stroke="currentColor" stroke-width="2"/></svg></button>
    <button class="win-btn" aria-label="還原"><svg width="14" height="14"><path d="M5 4V2H12V8H10M3 5H9.500V11H3zM3 6H9.500M5 2.500H12" fill="none" stroke="currentColor"/></svg></button>
    <button class="win-btn" aria-label="關閉"><svg width="14" height="14"><path d="M4 3L11 10M11 3L4 10" stroke="currentColor" stroke-width="2"/></svg></button>
  </div>
</nav>

<div class="tool-row d-flex flex-shrink-0">
  <div class="tool-group d-flex align-items-center" role="toolbar" aria-label="標準">
    <span class="grip"></span>
    <button class="tool" aria-label="開新檔案"><svg><use href="#new"/></svg></button>
    <button class="tool" aria-label="開啟舊檔"><svg><use href="#open"/></svg></button>
    <button class="tool" aria-label="儲存檔案"><svg><use href="#save"/></svg></button>
    <button class="tool" aria-label="產生工程圖"><svg><use href="#g-draw"/></svg></button>
    <button class="tool" aria-label="產生組合件"><svg><use href="#g-asm"/></svg></button>
    <span class="bar-sep"></span>
    <button class="tool" aria-label="列印"><svg><use href="#print"/></svg></button>
    <button class="tool" aria-label="預覽列印"><svg><use href="#preview"/></svg></button>
    <span class="bar-sep"></span>
    <button class="tool" aria-label="復原"><svg><use href="#undo"/></svg></button><button class="drop" aria-label="復原清單"></button>
    <button class="tool" aria-label="重做"><svg><use href="#redo"/></svg></button><button class="drop off" aria-label="重做清單"></button>
    <span class="bar-sep"></span>
    <button class="tool on" aria-label="選擇"><svg><use href="#arrow"/></svg></button>
    <button class="tool" aria-label="草圖"><svg><use href="#g-sketch"/></svg></button>
    <button class="tool" aria-label="重新計算"><svg><use href="#light"/></svg></button>
    <span class="bar-sep"></span>
    <button class="tool" aria-label="格線"><svg><use href="#g-grid"/></svg></button>
    <button class="tool" aria-label="材質"><svg><use href="#g-brick"/></svg></button>
    <span class="bar-sep"></span>
    <button class="tool" aria-label="量測"><svg><use href="#tape"/></svg></button>
    <button class="tool" aria-label="物質特性"><svg><use href="#g-scale"/></svg></button>
    <button class="tool" aria-label="數學關係式"><svg><use href="#sigma"/></svg></button>
    <button class="tool" aria-label="選項"><svg><use href="#checks"/></svg></button>
    <button class="tool" aria-label="說明"><svg><use href="#help"/></svg></button>
  </div>
  <div class="tool-group d-flex align-items-center" role="toolbar" aria-label="檢視">
    <span class="grip"></span>
    <button class="tool" aria-label="檢視基準面"><svg><use href="#g-plane"/></svg></button>
    <button class="tool" aria-label="檢視基準軸"><svg><use href="#g-axis"/></svg></button>
    <button class="tool" aria-label="最適當大小"><svg><use href="#zfit"/></svg></button>
    <button class="tool" aria-label="局部放大"><svg><use href="#zarea"/></svg></button>
    <button class="tool" aria-label="拉近拉遠"><svg><use href="#zinout"/></svg></button>
    <button class="tool" aria-label="放大選取範圍"><svg><use href="#zsel"/></svg></button>
    <button class="tool" aria-label="旋轉視角"><svg><use href="#rotate"/></svg></button>
    <button class="tool" aria-label="平移"><svg><use href="#pan"/></svg></button>
    <button class="tool" aria-label="3D視圖"><svg><use href="#g-car"/></svg></button>
    <span class="bar-sep"></span>
    <button class="tool" aria-label="過濾器"><svg><use href="#g-filter"/></svg></button>
    <button class="tool" aria-label="過濾頂點"><svg><use href="#fv"/></svg></button>
    <button class="tool" aria-label="過濾邊線"><svg><use href="#fe"/></svg></button>
    <button class="tool" aria-label="過濾面"><svg><use href="#ff"/></svg></button>
    <button class="tool" aria-label="線架構"><svg><use href="#wire"/></svg></button>
    <button class="tool" aria-label="移除隱藏線"><svg><use href="#hidden"/></svg></button>
    <button class="tool on" aria-label="帶邊線塗彩"><svg><use href="#shaded"/></svg></button>
    <button class="tool" aria-label="塗彩"><svg><use href="#shade2"/></svg></button>
    <span class="bar-sep"></span>
    <button class="tool" aria-label="剖面視角"><svg><use href="#section"/></svg></button>
    <button class="tool" aria-label="真實視圖"><svg><use href="#g-ball"/></svg></button>
    <button class="tool on" aria-label="檢視限制條件"><svg><use href="#glasses"/></svg></button>
  </div>
</div>
<div class="tool-row d-flex flex-shrink-0">
  <div class="tool-group d-flex align-items-center" role="toolbar" aria-label="草圖">
    <span class="grip"></span>
    <button class="tool" aria-label="草圖"><svg><use href="#g-sketch"/></svg></button>
    <button class="tool on" aria-label="3D草圖"><svg><use href="#sketch3d"/></svg></button>
    <button class="tool" aria-label="智慧型尺寸"><svg><use href="#dim"/></svg></button>
    <span class="bar-sep"></span>
    <button class="tool" aria-label="直線"><svg><use href="#line"/></svg></button>
    <button class="tool" aria-label="矩形"><svg><use href="#rect"/></svg></button>
    <button class="tool" aria-label="平行四邊形"><svg><use href="#diam"/></svg></button>
    <button class="tool" aria-label="多邊形"><svg><use href="#g-hex"/></svg></button>
    <button class="tool" aria-label="圓"><svg><use href="#circ"/></svg></button>
    <button class="tool" aria-label="圓心弧"><svg><use href="#arc1"/></svg></button>
    <button class="tool" aria-label="切線弧"><svg><use href="#arc2"/></svg></button>
    <button class="tool" aria-label="三點弧"><svg><use href="#arc3"/></svg></button>
    <button class="tool" aria-label="草圖導角"><svg><use href="#chamf"/></svg></button>
    <button class="tool" aria-label="草圖圓角"><svg><use href="#fillet"/></svg></button>
    <button class="tool" aria-label="中心線"><svg><use href="#cline"/></svg></button>
    <button class="tool" aria-label="不規則曲線"><svg><use href="#spline"/></svg></button>
    <button class="tool" aria-label="點"><svg><use href="#pt"/></svg></button>
    <button class="tool" aria-label="基準面"><svg><use href="#skplane"/></svg></button>
    <span class="bar-sep"></span>
    <button class="tool" aria-label="加入限制條件"><svg><use href="#g-redo2"/></svg></button>
    <button class="tool" aria-label="幾何建構線"><svg><use href="#tee"/></svg></button>
    <button class="tool" aria-label="鏡射圖元"><svg><use href="#g-mirror"/></svg></button>
    <button class="tool" aria-label="參考圖元"><svg><use href="#convert"/></svg></button>
    <button class="tool" aria-label="偏移圖元"><svg><use href="#g-offset"/></svg></button>
    <button class="tool" aria-label="分割圖元"><svg><use href="#snap"/></svg></button>
    <button class="tool" aria-label="修剪圖元"><svg><use href="#trim"/></svg></button>
    <button class="tool" aria-label="延伸圖元"><svg><use href="#extend"/></svg></button>
    <button class="tool" aria-label="移動圖元"><svg><use href="#g-move"/></svg></button>
    <button class="tool" aria-label="旋轉圖元"><svg><use href="#g-rot"/></svg></button>
    <button class="tool" aria-label="直線複製"><svg><use href="#g-lin"/></svg></button>
    <button class="tool" aria-label="環狀複製"><svg><use href="#g-cir"/></svg></button>
  </div>
  <div class="tool-group d-flex align-items-center ps-1" role="toolbar" aria-label="特徵">
    <span class="grip"></span>
    <button class="tool" aria-label="伸長填料"><svg><use href="#extrude"/></svg></button>
    <button class="tool" aria-label="伸長除料"><svg><use href="#g-cut"/></svg></button>
    <button class="tool" aria-label="旋轉填料"><svg><use href="#g-rev"/></svg></button>
    <button class="tool" aria-label="旋轉除料"><svg><use href="#g-arch"/></svg></button>
    <button class="tool" aria-label="掃出填料"><svg><use href="#g-sweep"/></svg></button>
    <button class="tool" aria-label="掃出除料"><svg><use href="#g-swcut"/></svg></button>
    <button class="tool" aria-label="疊層拉伸"><svg><use href="#loft"/></svg></button>
    <span class="bar-sep"></span>
    <button class="tool" aria-label="圓角"><svg><use href="#g-fil"/></svg></button>
    <button class="tool" aria-label="導角"><svg><use href="#g-cha"/></svg></button>
    <button class="tool" aria-label="肋材"><svg><use href="#g-rib"/></svg></button>
    <span class="bar-sep"></span>
    <button class="tool" aria-label="直線複製排列"><svg><use href="#g-pat"/></svg></button>
    <button class="tool" aria-label="環狀複製排列"><svg><use href="#g-cpat"/></svg></button>
    <button class="tool" aria-label="鏡射"><svg><use href="#g-mir"/></svg></button>
    <span class="bar-sep"></span>
    <button class="tool" aria-label="參考幾何"><svg><use href="#refgeo"/></svg></button><button class="drop" aria-label="參考幾何清單"></button>
    <button class="tool" aria-label="曲線"><svg><use href="#curve"/></svg></button><button class="drop" aria-label="曲線清單"></button>
  </div>
</div>

<main class="workspace d-flex flex-grow-1 position-relative">
  <aside class="side d-flex flex-column">
    <div class="side-tabs d-flex flex-shrink-0">
      <button class="side-tab active" aria-label="特徵管理員"><svg><use href="#part"/></svg></button>
      <button class="side-tab" aria-label="屬性管理員"><svg><use href="#hand"/></svg></button>
      <button class="side-tab" aria-label="模型組態管理員"><svg><use href="#config"/></svg></button>
      <button class="side-tab" aria-label="PhotoWorks"><svg><use href="#photo"/></svg></button>
      <button class="more" aria-label="展開"><svg width="10" height="10"><path d="M1.500 2L4.500 5 1.500 8M5.500 2L8.500 5 5.500 8" fill="none" stroke="currentColor" stroke-width="1.500"/></svg></button>
    </div>
    <div class="tree-box flex-grow-1">
      <ul class="tree list-unstyled mb-0">
        <li><svg><use href="#partlight"/></svg><span class="tree-text">零件6</span></li>
        <li><span class="twig"><button class="plus" aria-label="展開"></button></span><svg><use href="#notes"/></svg><span class="tree-text">註記</span></li>
        <li><span class="twig"><button class="plus" aria-label="展開"></button></span><svg><use href="#binder"/></svg><span class="tree-text">Design Binder</span></li>
        <li><span class="twig"></span><svg><use href="#material"/></svg><span class="tree-text">材質 &lt;未指定&gt;</span></li>
        <li><span class="twig"><button class="plus" aria-label="展開"></button></span><svg><use href="#sun"/></svg><span class="tree-text">光源及攝影機</span></li>
        <li><span class="twig"></span><svg><use href="#plane"/></svg><span class="tree-text">前基準面</span></li>
        <li><span class="twig"></span><svg><use href="#plane"/></svg><span class="tree-text">上基準面</span></li>
        <li><span class="twig"></span><svg><use href="#plane"/></svg><span class="tree-text">右基準面</span></li>
        <li><span class="twig"></span><svg><use href="#origin"/></svg><span class="tree-text">原點</span></li>
        <li><span class="twig"></span><svg><use href="#axis"/></svg><span class="tree-text">X</span></li>
        <li><span class="twig"></span><svg><use href="#axis"/></svg><span class="tree-text">Y</span></li>
        <li><span class="twig"></span><svg><use href="#axis"/></svg><span class="tree-text">Z</span></li>
        <li><span class="twig"></span><svg><use href="#sketch"/></svg><span class="tree-text">(-) 草圖1</span></li>
        <li><span class="twig"></span><svg><use href="#plane-y"/></svg><span class="tree-text">平面1</span></li>
        <li><span class="twig"></span><svg><use href="#sketch"/></svg><span class="tree-text">(-) 草圖2 導出</span></li>
        <li><span class="twig"></span><svg><use href="#sk3dl"/></svg><span class="tree-text">(-) 3D草圖1</span></li>
      </ul>
    </div>
  </aside>

  <section class="views d-flex flex-column flex-grow-1">
    <div class="pane pane-top d-flex">
      <div class="canvas flex-grow-1 position-relative">
        <svg viewBox="202 83 931 357" role="img" aria-label="上視圖">
          <g fill="none" stroke="#808080" stroke-width="1.600">
            <circle cx="589.500" cy="277" r="118" stroke-width=".8"/>
            <path d="M657.500 159L521.500 159 453.500 277 521.500 395 657.500 395 725.500 277zM589.500 141L471.500 209V345L589.500 413 707.500 345V209z"/>
          </g>
          <circle cx="589.500" cy="277" r="136.300" fill="none" stroke="#0000e0" stroke-width="1.800"/>
          <g color="#000">
            <use href="#star-mark" x="589.500" y="141.500"/><use href="#star-mark" x="657.500" y="159.500"/><use href="#star-mark" x="521.500" y="159.500"/><use href="#star-mark" x="471.500" y="209.500"/><use href="#star-mark" x="453.500" y="277.500"/><use href="#star-mark" x="471.500" y="345.500"/><use href="#star-mark" x="521.500" y="395.500"/><use href="#star-mark" x="657.500" y="395.500"/><use href="#star-mark" x="707.500" y="345.500"/><use href="#star-mark" x="725.500" y="277.500"/>
          </g>
          <use href="#star-mark" x="707.500" y="211.500" color="#0000e0"/>
          <circle cx="589.500" cy="413" r="2.500"/>
          <g color="#f00"><use href="#star-mark" x="589.500" y="277.500"/><path d="M589 277.500H605M597 275L605 277.500 597 280z" fill="#f00" stroke="#f00"/></g>
          <g font-family="Liberation Serif,serif" font-size="12">
            <path d="M243 381.500H264V385.500H243z" fill="#ee6a6a" stroke="#8c1616"/><path d="M262 378.500L271 383.500 262 388.500z" fill="#c81616"/>
            <path d="M239.500 385H243.500V405H239.500z" fill="#7474ee" stroke="#16168c"/><path d="M236.500 404H246.500L241.500 413z" fill="#1616c8"/>
            <circle cx="241" cy="383" r="4.500" fill="#0c5c1c"/>
            <text x="270" y="387" fill="#c81616">X</text><text x="237" y="421" fill="#1616c8">Z</text>
          </g>
        </svg>
        <div class="corner position-absolute">
          <svg width="104" height="104"><path d="M0 0H104V104z" fill="#dcdcdc"/><path d="M0 0L104 104M104 0L52 52" stroke="#aaa" fill="none"/></svg>
          <button class="corner-ok position-absolute" aria-label="結束草圖"><svg width="38" height="40"><path d="M18 3H2V14C2 22 7 26 17 25" fill="none" stroke="#8488ea" stroke-width="2"/><path d="M4 18L9 11 22 5 25 9 12 16z" fill="#f0dc70" stroke="#85785a"/><path d="M19 6L22 5 25 9 22 11z" fill="#dc8a90" stroke="#85785a"/><path d="M4 18L6 15 9 17z" fill="#555"/><path d="M28 18C35 22 32 31 25 33L26 37 16 31 25 23V27C29 26 30 22 28 18z" fill="#b27bdc" stroke="#9561bf"/></svg></button>
          <button class="corner-no position-absolute" aria-label="取消"><svg width="26" height="27"><path d="M5 4C9 10 13 16 20 22M21 3C14 8 9 15 5 23" fill="none" stroke="#d84c4c" stroke-width="6" stroke-linecap="round"/><path d="M5 4C9 10 13 16 20 22M21 3C14 8 9 15 5 23" fill="none" stroke="#f27474" stroke-width="4" stroke-linecap="round"/></svg></button>
        </div>
        <div class="view-name position-absolute d-flex align-items-center">
          <svg><use href="#link"/></svg>
          <select aria-label="上方視角" id="view1"><option>*上視</option></select>
          <button class="drop" aria-label="選擇視角"></button>
        </div>
      </div>
      <div class="scroll-v d-flex flex-column">
        <button class="sb-btn" aria-label="向上捲動"><svg><use href="#up"/></svg></button>
        <div class="sb-thumb my-1" style="flex:303 1 0"><span class="sb-lines"></span></div>
        <div style="flex:16 1 0"></div>
        <button class="sb-btn" aria-label="向下捲動"><svg><use href="#down"/></svg></button>
      </div>
    </div>
    <div class="splitter flex-shrink-0"></div>
    <div class="pane pane-bottom d-flex flex-column">
      <div class="d-flex flex-grow-1 canvas">
        <div class="canvas flex-grow-1 position-relative">
          <svg viewBox="202 448 931 322" role="img" aria-label="前視圖">
            <g stroke="#bebebe" stroke-width="1.500" fill="#bebebe">
              <path d="M453 633.500H727M442 669.500L738 669"/>
              <path d="M468 633.500L479 631V636zM575 633.500L564 631V636zM605 633.500L616 631V636zM712 633.500L701 631V636zM441 669.500L447 667V672zM502 669.500L496 667V672zM529 669.500L540 667V672zM650 669.500L639 667V672zM677 670L686 667V673zM739 669L731 666V672z"/>
              <path d="M453 633.500H468M574 633.500H602M710 633.500H727M502 669.500H528M651 669.500H677M589.500 631V669" stroke="#777"/>
            </g>
            <path d="M453.500 633.500C456 650 463 669 472 669 487 669 500 634 521 634 546 634 564 669 589.500 669 615 669 633 634 658 634 680 634 692 669 707 669 717 669 723 652 726.500 633.500" fill="none" stroke="#0000e0" stroke-width="1.900"/>
            <path d="M446.500 598.500L466.500 704.500 518.500 598.500M661 598.500L713 705 732.500 599.500" fill="none" stroke="#e0107c" stroke-width="1.100" stroke-dasharray="6 2"/>
            <path d="M518.500 598.500L589.500 704.500 661 598.500" fill="none" stroke="#e0107c"/>
            <g fill="#f5067c"><circle cx="446.500" cy="598.500" r="2.700"/><circle cx="466.500" cy="704.500" r="2.700"/><circle cx="518.500" cy="598.500" r="2.700"/><circle cx="589.500" cy="704.500" r="2.700"/><circle cx="661" cy="598.500" r="3"/><circle cx="713" cy="705" r="3"/><circle cx="732.500" cy="599.500" r="2.700"/></g>
            <g color="#000"><use href="#star-mark" x="453.500" y="633.500"/><use href="#star-mark" x="521.500" y="633.500"/><use href="#star-mark" x="658.500" y="633.500"/><use href="#star-mark" x="726.500" y="633.500"/><use href="#star-mark" x="471.500" y="669.500"/><use href="#star-mark" x="589.500" y="669.500"/><use href="#star-mark" x="707.500" y="669.500"/></g>
            <path d="M589.500 671V645M584 669.500H602M588 646L589.500 639 591 646z" fill="#f00" stroke="#f00"/>
            <g font-family="Liberation Serif,serif" font-size="12">
              <path d="M243 711H264V715H243z" fill="#ee6a6a" stroke="#8c1616"/><path d="M262 708L271 713 262 718z" fill="#c81616"/>
              <path d="M238.500 690H242.500V710H238.500z" fill="#54aa60" stroke="#0c5c1c"/><path d="M236 692H245.500L240.500 682z" fill="#146c24"/>
              <circle cx="241" cy="713" r="4.500" fill="#1212b8"/>
              <text x="270" y="717" fill="#c81616">X</text><text x="236" y="681" fill="#146c24">Y</text>
            </g>
          </svg>
          <div class="view-name idle position-absolute d-flex align-items-center">
            <svg><use href="#link"/></svg>
            <select aria-label="下方視角" id="view2"><option>*前視</option></select>
            <button class="drop" aria-label="選擇視角"></button>
          </div>
        </div>
        <div class="scroll-v"><button class="sb-btn off" aria-label="向上捲動"><svg><use href="#up"/></svg></button></div>
      </div>
      <div class="scroll-h d-flex flex-shrink-0"><span class="split-box"></span><button class="sb-btn off" aria-label="向左捲動"><svg><use href="#left"/></svg></button></div>
    </div>
  </section>

  <section class="palette position-absolute d-flex flex-column" aria-labelledby="palette-title">
    <div class="palette-head d-flex align-items-center justify-content-between flex-shrink-0">
      <h2 id="palette-title">方位</h2>
      <button class="shut" aria-label="關閉"><svg width="13" height="13"><path d="M2 2L11 11M11 2L2 11" stroke="currentColor" stroke-width="2"/></svg></button>
    </div>
    <div class="palette-tools d-flex align-items-center flex-shrink-0">
      <button class="tool push" aria-label="圖釘"><svg><use href="#pin"/></svg></button>
      <button class="tool" aria-label="新視角"><svg><use href="#scope-new"/></svg></button>
      <button class="tool" aria-label="更新標準視角"><svg><use href="#scope-upd"/></svg></button>
      <button class="tool" aria-label="重設標準視角"><svg><use href="#scope-res"/></svg></button>
    </div>
    <div class="palette-list d-flex flex-grow-1">
      <div class="view-list flex-grow-1">
        <button>*正視於</button><button>*前視</button><button>*後視</button><button>*左視</button><button>*右視</button><button class="sel">*上視</button><button>*下視</button><button>*等角視</button><button>*不等角視圖</button>
      </div>
      <div class="scroll-v d-flex flex-column">
        <button class="sb-btn" aria-label="向上捲動"><svg><use href="#up"/></svg></button>
        <div class="sb-thumb" style="flex:78 1 0"><span class="sb-lines"></span></div>
        <div style="flex:22 1 0"></div>
        <button class="sb-btn" aria-label="向下捲動"><svg><use href="#down"/></svg></button>
      </div>
    </div>
  </section>
</main>

<footer class="status d-flex align-items-center flex-shrink-0">
  <span>準備就緒</span>
  <span class="ms-auto pe-3">115.016mm</span>
  <span class="ps-1 pe-3">54.017mm</span>
  <span class="cell cell-z">0mm</span>
  <span class="cell">不足的定義</span>
  <span class="cell"></span>
  <span class="cell">正在編輯：3D草圖1</span>
  <span class="cell ps-2"><svg><use href="#light"/></svg></span>
  <span class="status-end"><svg><use href="#qhelp"/></svg></span>
</footer>

<script src="https://cdn.jsdelivr.net/npm/bootstrap@5.3.0/dist/js/bootstrap.bundle.min.js"></script>
</body>
</html>
